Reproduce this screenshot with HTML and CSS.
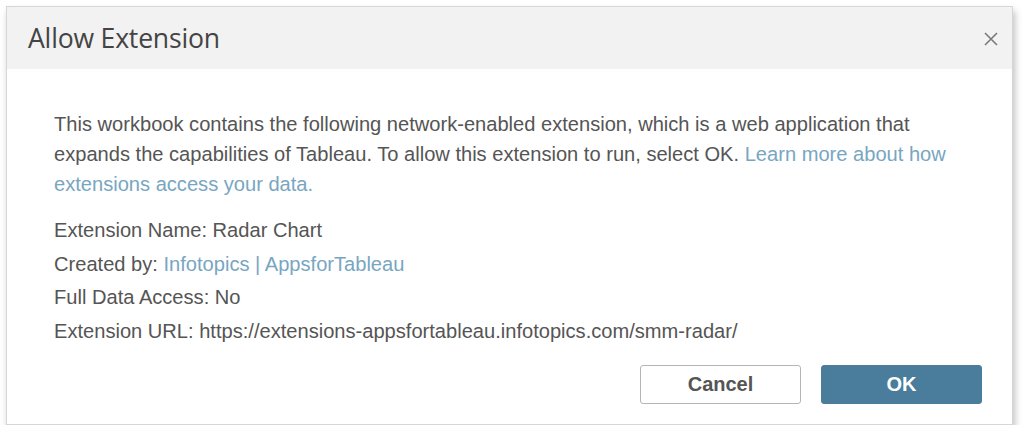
FILE: index.html
```html
<!DOCTYPE html>
<html>
<head>
<meta charset="utf-8">
<link rel="stylesheet" href="styles.css">
</head>
<body>
<div class="dialog">
  <div class="header">
    <h1 class="title">Allow Extension</h1>
    <span class="close" aria-label="Close">
      <svg width="14" height="14" viewBox="0 0 14 14"><path d="M1 1L13 13M13 1L1 13" stroke="#7a7a7a" stroke-width="1.6" fill="none"/></svg>
    </span>
  </div>
  <div class="body">
    <p class="intro">This workbook contains the following network-enabled extension, which is a web application that expands the capabilities of Tableau. To allow this extension to run, select OK. <a class="link" href="#">Learn more about how extensions access your data.</a></p>
    <div class="details">
      <div class="row">Extension Name: Radar Chart</div>
      <div class="row">Created by: <a class="link" href="#">Infotopics | AppsforTableau</a></div>
      <div class="row">Full Data Access: No</div>
      <div class="row">Extension URL: https://extensions-appsfortableau.infotopics.com/smm-radar/</div>
    </div>
    <div class="actions">
      <button class="btn btn-cancel">Cancel</button>
      <button class="btn btn-ok">OK</button>
    </div>
  </div>
</div>
</body>
</html>
```

FILE: styles.css
```css
html, body {
  margin: 0;
  padding: 0;
  background: #ffffff;
}
body {
  padding: 6px 0 0 6px;
  font-family: "Liberation Sans", Arial, sans-serif;
}
.dialog {
  width: 1005px;
  height: 417px;
  border: 1px solid #d6d6d6;
  background: #ffffff;
  box-shadow: 2px 5px 7px rgba(0, 0, 0, 0.25);
  display: flex;
  flex-direction: column;
}
.header {
  height: 62px;
  background: #f2f2f2;
  display: flex;
  align-items: center;
  justify-content: space-between;
  padding: 0 14px 0 21px;
}
.title {
  margin: 0;
  font-family: "Open Sans", "Liberation Sans", sans-serif;
  font-weight: 400;
  font-size: 26.6px;
  color: #444444;
  letter-spacing: -0.2px;
}
.close {
  display: flex;
  width: 14px;
  height: 14px;
  margin-top: 2px;
}
.body {
  flex: 1;
  padding: 40px 30px 0 47px;
  display: flex;
  flex-direction: column;
  color: #555555;
  font-size: 20.1px;
}
.intro {
  margin: 0;
  line-height: 30px;
  padding-right: 10px;
}
.link {
  color: #78a6c1;
  text-decoration: none;
}
.details {
  margin-top: 15px;
}
.row {
  line-height: 33.5px;
}
.actions {
  margin-top: 17px;
  display: flex;
  justify-content: flex-end;
  gap: 20px;
}
.btn {
  width: 161px;
  height: 39px;
  border-radius: 3px;
  font-family: "Liberation Sans", Arial, sans-serif;
  font-weight: 700;
  font-size: 20px;
  cursor: pointer;
}
.btn-cancel {
  background: #ffffff;
  border: 1px solid #b5b5b5;
  color: #555555;
}
.btn-ok {
  background: #4a7d9c;
  border: 1px solid #4a7d9c;
  color: #ffffff;
}
```
